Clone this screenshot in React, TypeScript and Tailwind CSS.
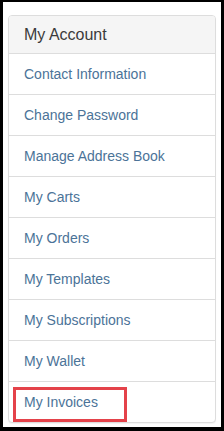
const links = [
  'Contact Information',
  'Change Password',
  'Manage Address Book',
  'My Carts',
  'My Orders',
  'My Templates',
  'My Subscriptions',
  'My Wallet',
  'My Invoices',
]

export default function App() {
  return (
    <div className="w-[224px] h-[431px] bg-black pt-[2px] pl-[3px] pr-[3px] pb-[4px] font-['Liberation_Sans',Arial,sans-serif]">
      <div className="relative h-full overflow-hidden bg-white pt-[13px] pl-[5px] pr-[5px]">
        <div className="w-[208px] rounded-[4px] border border-[#dddddd] bg-white shadow-[0_1px_1px_rgba(0,0,0,0.05)]">
          {/* Heading */}
          <div className="rounded-t-[3px] border-b border-[#dddddd] bg-[#f5f5f5] px-[15px] py-[10px] text-[16px] leading-[17px] text-[#3b3b3b]">
            My Account
          </div>

          {/* Links */}
          <ul className="m-0 list-none p-0">
            {links.map((label, i) => (
              <li
                key={label}
                className={
                  i < links.length - 1
                    ? 'border-b border-[#dddddd] px-[15px] py-[10px] text-[14px] leading-[20px] text-[#4b7398]'
                    : 'px-[15px] py-[10px] text-[14px] leading-[20px] text-[#4b7398]'
                }
              >
                {label}
              </li>
            ))}
          </ul>
        </div>

        {/* Highlight annotation on the last link */}
        <div className="absolute left-[10px] top-[385px] h-[35px] w-[114px] border-[3px] border-[#e4424a]" />
      </div>
    </div>
  )
}
